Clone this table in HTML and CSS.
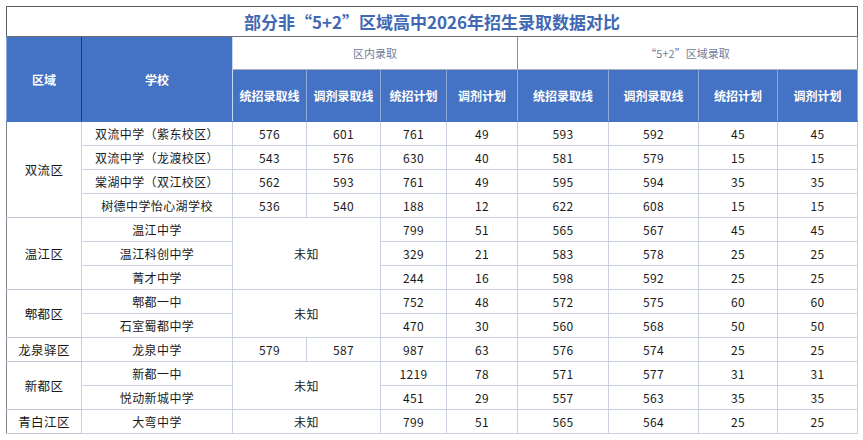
FILE: index.html
```html
<!DOCTYPE html>
<html lang="zh">
<head>
<meta charset="utf-8">
<link rel="stylesheet" href="styles.css">
</head>
<body>
<div class="wrap">
<table class="tbl">
<colgroup>
<col style="width:75px"><col style="width:151px"><col style="width:74px"><col style="width:74px"><col style="width:66px"><col style="width:71px"><col style="width:91px"><col style="width:90px"><col style="width:79px"><col style="width:80px">
</colgroup>
<thead>
<tr class="title-row"><th colspan="10" class="title">部分非“5+2”区域高中2026年招生录取数据对比</th></tr>
<tr class="grp-row">
<th rowspan="2" class="hd hd-key">区域</th>
<th rowspan="2" class="hd hd-key hd-school">学校</th>
<th colspan="4" class="grp">区内录取</th>
<th colspan="4" class="grp">“5+2”区域录取</th>
</tr>
<tr class="sub-row">
<th class="hd">统招录取线</th><th class="hd">调剂录取线</th><th class="hd">统招计划</th><th class="hd">调剂计划</th>
<th class="hd">统招录取线</th><th class="hd">调剂录取线</th><th class="hd">统招计划</th><th class="hd">调剂计划</th>
</tr>
</thead>
<tbody>
<tr><td rowspan="4" class="area">双流区</td><td>双流中学（紫东校区）</td><td>576</td><td>601</td><td>761</td><td>49</td><td>593</td><td>592</td><td>45</td><td>45</td></tr>
<tr><td>双流中学（龙渡校区）</td><td>543</td><td>576</td><td>630</td><td>40</td><td>581</td><td>579</td><td>15</td><td>15</td></tr>
<tr><td>棠湖中学（双江校区）</td><td>562</td><td>593</td><td>761</td><td>49</td><td>595</td><td>594</td><td>35</td><td>35</td></tr>
<tr><td>树德中学怡心湖学校</td><td>536</td><td>540</td><td>188</td><td>12</td><td>622</td><td>608</td><td>15</td><td>15</td></tr>
<tr><td rowspan="3" class="area">温江区</td><td>温江中学</td><td rowspan="3" colspan="2">未知</td><td>799</td><td>51</td><td>565</td><td>567</td><td>45</td><td>45</td></tr>
<tr><td>温江科创中学</td><td>329</td><td>21</td><td>583</td><td>578</td><td>25</td><td>25</td></tr>
<tr><td>菁才中学</td><td>244</td><td>16</td><td>598</td><td>592</td><td>25</td><td>25</td></tr>
<tr><td rowspan="2" class="area">郫都区</td><td>郫都一中</td><td rowspan="2" colspan="2">未知</td><td>752</td><td>48</td><td>572</td><td>575</td><td>60</td><td>60</td></tr>
<tr><td>石室蜀都中学</td><td>470</td><td>30</td><td>560</td><td>568</td><td>50</td><td>50</td></tr>
<tr><td class="area">龙泉驿区</td><td>龙泉中学</td><td>579</td><td>587</td><td>987</td><td>63</td><td>576</td><td>574</td><td>25</td><td>25</td></tr>
<tr><td rowspan="2" class="area">新都区</td><td>新都一中</td><td rowspan="2" colspan="2">未知</td><td>1219</td><td>78</td><td>571</td><td>577</td><td>31</td><td>31</td></tr>
<tr><td>悦动新城中学</td><td>451</td><td>29</td><td>557</td><td>563</td><td>35</td><td>35</td></tr>
<tr><td class="area">青白江区</td><td>大弯中学</td><td colspan="2">未知</td><td>799</td><td>51</td><td>565</td><td>564</td><td>25</td><td>25</td></tr>
</tbody>
</table>
</div>
</body>
</html>
```
FILE: styles.css
```css
html, body {
  margin: 0;
  padding: 0;
  background: #ffffff;
}
.wrap {
  padding: 6px 0 0 6px;
}
.tbl {
  width: 851px;
  table-layout: fixed;
  border-collapse: collapse;
  font-family: "Noto Sans CJK SC", "Noto Sans", sans-serif;
  color: #1a1a1a;
  border: 1px solid #7d8590;
}
.tbl th, .tbl td {
  padding: 0;
  text-align: center;
  vertical-align: middle;
  white-space: nowrap;
  overflow: hidden;
}
.title {
  height: 29px;
  font-size: 17px;
  font-weight: 700;
  color: #4169b3;
  background: #ffffff;
  border: 1px solid #5a5f66;
  border-bottom: 1px solid #6b7078;
}
.grp-row th.grp {
  height: 32px;
  font-size: 11px;
  font-weight: 400;
  color: #6f7d9a;
  background: #ffffff;
  border-left: 1px solid #8a8f98;
  border-right: 1px solid #8a8f98;
  border-bottom: 1px solid #a9b0bb;
}
.hd {
  background: #4472c4;
  color: #ffffff;
  font-size: 12px;
  font-weight: 700;
  border-left: 1px solid #8ea8d8;
  border-right: 1px solid #8ea8d8;
  border-bottom: 1px solid #4472c4;
}
.sub-row .hd {
  height: 51px;
}
.hd-key {
  border-right: 1px solid #22385e;
}
.hd-school {
  border-right: 1px solid #c9d6ee;
}
.tbl td {
  height: 23px;
  font-size: 12px;
  letter-spacing: 0.4px;
  border: 1px solid #c9d0de;
}
.tbl td.area {
  font-size: 12.5px;
  border-left: 1px solid #7d8590;
  border-bottom: 1px solid #c3cad6;
}
```
